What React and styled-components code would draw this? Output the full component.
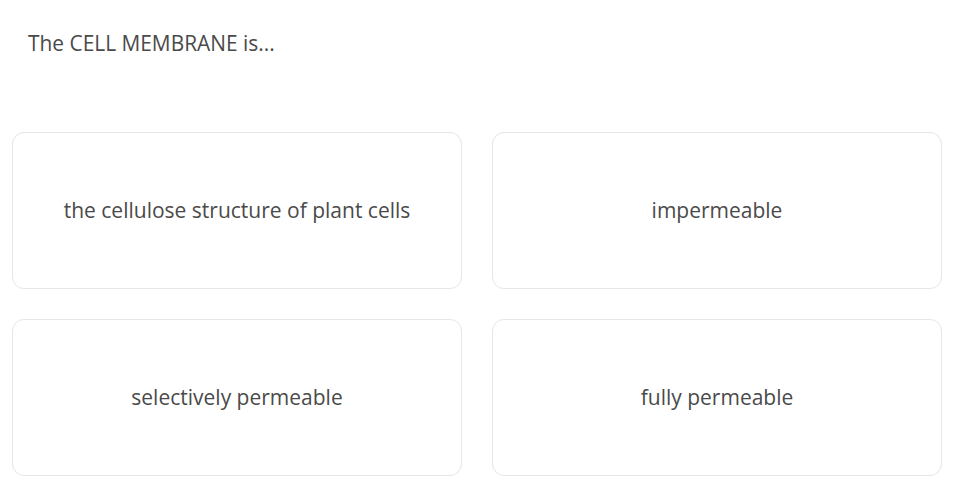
import React from "react";
import styled, { createGlobalStyle } from "styled-components";

const Global = createGlobalStyle`
  html, body { margin: 0; padding: 0; background: #fff; }
  body { font-family: "Open Sans", "Noto Sans", sans-serif; }
`;

const Page = styled.div`
  padding: 0 15px 0 12px;
  box-sizing: border-box;
  width: 957px;
`;

const Question = styled.div`
  padding: 28px 0 0 16px;
  height: 132px;
  box-sizing: border-box;
  font-size: 20.9px;
  line-height: 30px;
  color: #4a4a4a;
`;

const Grid = styled.div`
  display: grid;
  grid-template-columns: 450px 450px;
  grid-auto-rows: 157px;
  column-gap: 30px;
  row-gap: 30px;
`;

const Option = styled.div`
  display: flex;
  align-items: center;
  justify-content: center;
  box-sizing: border-box;
  border: 1.5px solid #e6e6e6;
  border-radius: 12px;
  font-size: 21px;
  color: #4a4a4a;
  text-align: center;
  padding-bottom: 2px;
`;

const options = [
  "the cellulose structure of plant cells",
  "impermeable",
  "selectively permeable",
  "fully permeable",
];

export default function App() {
  return (
    <Page>
      <Global />
      <Question>The CELL MEMBRANE is...</Question>
      <Grid>
        {options.map((o) => (
          <Option key={o}>{o}</Option>
        ))}
      </Grid>
    </Page>
  );
}
